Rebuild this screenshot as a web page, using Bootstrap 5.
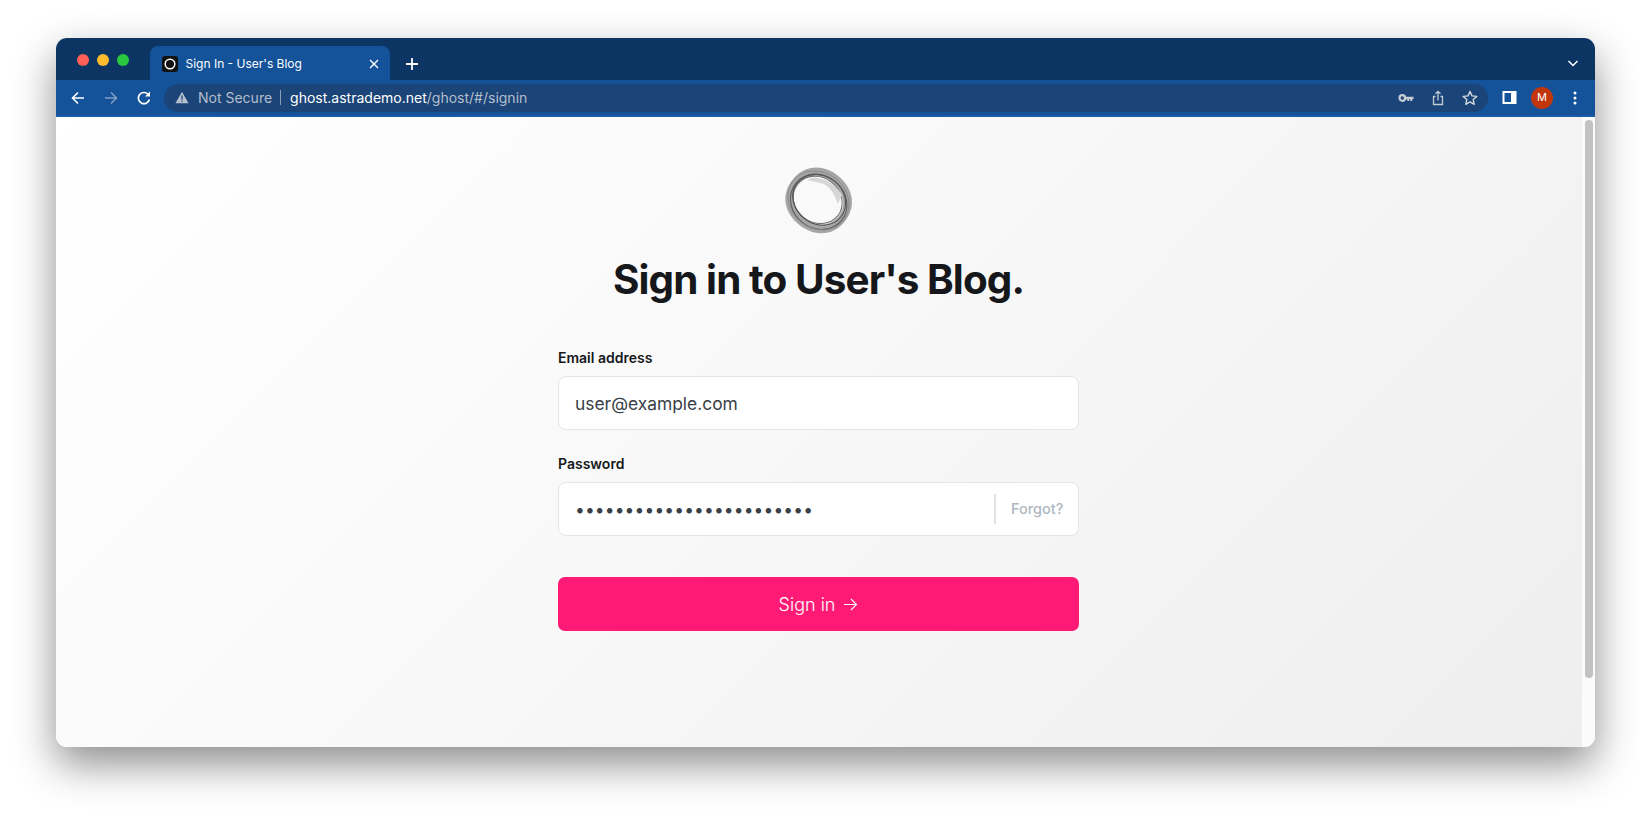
<!DOCTYPE html>
<html lang="en">
<head>
    <meta charset="UTF-8">
    <title>Sign In - User's Blog</title>
    <link href="https://cdn.jsdelivr.net/npm/bootstrap@5.3.2/dist/css/bootstrap.min.css" rel="stylesheet">
    <style>
        html, body { height: 100%; }
        body { background: #fff; overflow: hidden; font-family: Inter, "Liberation Sans", sans-serif; padding: 38px 57px 0 56px; }
        .browser-window { height: 709px; border-radius: 11px; overflow: hidden; box-shadow: 0 17px 42px 0 rgba(0,0,0,.45); }
        .tab-strip { height: 42px; background: #0d3563; padding-left: 94px; padding-right: 16px; color: #fff; }
        .traffic-lights { position: absolute; left: 21px; top: 16px; gap: 8px; }
        .light { width: 12px; height: 12px; border-radius: 50%; }
        .light-red { background: #ff5f57; }
        .light-yellow { background: #febc2e; }
        .light-green { background: #28c840; }
        .browser-tab { width: 240px; height: 34px; margin-top: 8px; background: #14529a; border-radius: 8px 8px 0 0; padding: 1px 11px 0 12px; font-size: 12px; }
        .tab-favicon { width: 16px; height: 16px; background: #111; border-radius: 3px; margin-right: 7.5px; }
        .new-tab { margin-left: 15px; margin-top: 9px; }
        .tab-chevron { margin-left: auto; margin-top: 19px; }
        .tool-bar { height: 37px; background: #14529a; padding: 0 18px 0 14px; border-bottom: 2px solid #1a5aa6; }
        .nav-icons { gap: 17px; margin-right: 12px; }
        .omnibox { height: 28px; background: #1b4478; border-radius: 14px; padding: 0 10px 0 11px; font-size: 14px; color: #b4bfcc; white-space: nowrap; }
        .warn-icon { margin-right: 9px; }
        .url-sep { width: 1px; height: 15px; background: #8a9db5; margin: 0 9px 0 8px; }
        .url-host { color: #fff; }
        .omni-actions { gap: 16px; }
        .tool-right { margin-left: 14px; gap: 14px; }
        .avatar-m { width: 22px; height: 22px; border-radius: 50%; background: #c2360b; color: #fff; font-size: 11px; margin-right: 6px; }
        .page-area { min-height: 0; background: linear-gradient(135deg, #fff 0%, #fafafa 35%, #eeeeee 100%); }
        .page-main { padding-top: 45px; }
        .site-logo { filter: blur(.4px); }
        .signin-title { font-size: 40.4px; font-weight: 700; letter-spacing: -.9px; color: #15171a; line-height: 50px; margin: 16px 0 43px; }
        .signin-form { width: 521px; }
        .field-label { font-size: 14px; font-weight: 600; color: #15171a; line-height: 20px; margin-bottom: 8px; }
        .signin-input { height: 54px; font-size: 17.4px; color: #394047; border: 1px solid #e3e5e7; border-radius: 8px; padding: 0 16px; background: #fff; }
        .signin-input:focus { box-shadow: none; border-color: #e3e5e7; }
        .email-input { margin-bottom: 24px; }
        .pass-box { height: 54px; background: #fff; border: 1px solid #e3e5e7; border-radius: 8px; }
        .pass-box .signin-input { border: 0; height: 52px; background: transparent; letter-spacing: .14px; }
        .forgot-link { width: 69px; height: 30px; border-left: 2px solid #dfe2e5; font-size: 14.5px; font-weight: 500; color: #aeb7c1; text-decoration: none; flex-shrink: 0; margin-right: 15px; padding-left: 15px; }
        .signin-btn { height: 54px; background: #ff1b75; border: 0; border-radius: 7px; color: #fff; font-size: 18px; font-weight: 300; margin-top: 41px; }
        .signin-btn:hover { background: #ff1b75; color: #fff; }
        .scroll-track { width: 14px; background: #fbfbfb; border-left: 1px solid #eee; padding: 3px 2px 0 3px; }
        .scroll-thumb { height: 558px; background: #c2c2c2; border-radius: 5px; }
    </style>
</head>
<body>

<div class="browser-window d-flex flex-column">
    <div class="tab-strip d-flex align-items-start position-relative">
        <div class="traffic-lights d-flex">
            <span class="light light-red"></span>
            <span class="light light-yellow"></span>
            <span class="light light-green"></span>
        </div>
        <div class="browser-tab d-flex align-items-center">
            <span class="tab-favicon d-flex align-items-center justify-content-center">
                <svg width="12" height="12" viewBox="0 0 12 12"><circle cx="6" cy="6" r="4.8" fill="none" stroke="#fff" stroke-width="1.5"/></svg>
            </span>
            <span class="flex-grow-1">Sign In - User's Blog</span>
            <svg width="10" height="10" viewBox="0 0 10 10"><path d="M1 1l8 8M9 1l-8 8" stroke="#fff" stroke-width="1.4"/></svg>
        </div>
        <svg class="new-tab" width="14" height="34" viewBox="0 0 14 34"><path d="M7 11v12M1 17h12" stroke="#fff" stroke-width="1.8"/></svg>
        <svg class="tab-chevron" width="12" height="12" viewBox="0 0 12 12"><path d="M1.5 4l4.5 4.5L10.5 4" fill="none" stroke="#fff" stroke-width="1.5"/></svg>
    </div>

    <div class="tool-bar d-flex align-items-center">
        <div class="nav-icons d-flex align-items-center">
            <svg width="16" height="16" viewBox="0 0 16 16"><path d="M14 8H2.5M8 2.5L2.5 8 8 13.5" fill="none" stroke="#fff" stroke-width="1.6"/></svg>
            <svg width="16" height="16" viewBox="0 0 16 16"><path d="M2 8h11.5M8 2.5L13.5 8 8 13.5" fill="none" stroke="#7f9dc4" stroke-width="1.6"/></svg>
            <svg width="16" height="16" viewBox="0 0 16 16"><path d="M13.4 9.5A5.6 5.6 0 1 1 12 4.2" fill="none" stroke="#fff" stroke-width="1.7"/><path d="M14 1.5V6.5H9z" fill="#fff"/></svg>
        </div>
        <div class="omnibox d-flex align-items-center flex-grow-1">
            <svg class="warn-icon" width="14" height="13" viewBox="0 0 14 13"><path d="M7 .8L13.5 12.2H.5z" fill="#b4bfcc"/><path d="M7 4.5v4M7 9.5v1.3" stroke="#1b4478" stroke-width="1.2"/></svg>
            <span>Not Secure</span>
            <span class="url-sep"></span>
            <span><span class="url-host">ghost.astrademo.net</span>/ghost/#/signin</span>
            <div class="omni-actions d-flex align-items-center ms-auto">
                <svg width="16" height="16" viewBox="0 0 16 16"><circle cx="4.3" cy="8" r="2.8" fill="none" stroke="#c6ccd4" stroke-width="2.2"/><path d="M7 6.8h8.5v2.4h-1.3v1.7h-1.9V9.2h-1.1v1.7H9.3V9.2H7z" fill="#c6ccd4"/></svg>
                <svg width="16" height="16" viewBox="0 0 16 16"><path d="M5.5 6.5H3.5v8h9v-8h-2M8 10.5V1.5M5.5 3.8L8 1.3l2.5 2.5" fill="none" stroke="#c6ccd4" stroke-width="1.3"/></svg>
                <svg width="16" height="16" viewBox="0 0 16 16"><path d="M8 1.5l2 4.4 4.8.5-3.6 3.2 1 4.7L8 11.9l-4.2 2.4 1-4.7L1.2 6.4 6 5.900z" fill="none" stroke="#d3d8de" stroke-width="1.4" stroke-linejoin="round"/></svg>
            </div>
        </div>
        <div class="tool-right d-flex align-items-center">
            <svg width="15" height="15" viewBox="0 0 15 15"><rect x=".5" y="1" width="14" height="13" fill="#fff"/><rect x="2.5" y="3" width="6.5" height="9" fill="#14529a"/></svg>
            <span class="avatar-m d-flex align-items-center justify-content-center">M</span>
            <svg width="4" height="14" viewBox="0 0 4 14"><circle cx="2" cy="2" r="1.5" fill="#fff"/><circle cx="2" cy="7" r="1.5" fill="#fff"/><circle cx="2" cy="12" r="1.5" fill="#fff"/></svg>
        </div>
    </div>

    <div class="page-area d-flex flex-grow-1">
        <main class="page-main flex-grow-1 d-flex flex-column align-items-center">
            <!-- логотип: наложенные кольца -->
            <svg class="site-logo" width="77" height="77" viewBox="0 0 72 72">
                <g fill="none" transform="rotate(38 36 36)">
                    <path d="M36 6.5C54 6.5 67.5 18 67.5 36S54 65 36 65 5 54 5 36 18 6.5 36 6.5zM36 15C22 15 12 24 12 36S22 57 36 57 60 48 60 36 50 15 36 15z" fill="#a6a6a6" fill-rule="evenodd"/>
                    <ellipse cx="35" cy="36" rx="24" ry="21" stroke="#6a6a6a" stroke-width=".9"/>
                    <ellipse cx="36" cy="35" rx="26" ry="22.5" stroke="#505050" stroke-width="1"/>
                    <ellipse cx="37" cy="37" rx="27.5" ry="24.5" stroke="#5a5a5a" stroke-width="1"/>
                    <ellipse cx="36" cy="36" rx="30" ry="26" stroke="#8a8a8a" stroke-width=".8"/>
                </g>
                <path d="M26 17C30 14 35 14 38 16 45 16 52 22 58 31L54 39C51 30 47 23 40 20 35 19 30 18 26 17z" fill="#d6d6d6"/>
            </svg>
            <h1 class="signin-title">Sign in to User's Blog.</h1>
            <form class="signin-form d-flex flex-column">
                <label class="field-label" for="identification">Email address</label>
                <input id="identification" class="form-control signin-input email-input" type="email" value="user@example.com">
                <label class="field-label" for="password">Password</label>
                <div class="pass-box d-flex align-items-center">
                    <input id="password" class="form-control signin-input flex-grow-1" type="password" value="aaaaaaaaaaaaaaaaaaaaaaaa">
                    <a class="forgot-link d-flex align-items-center" href="#">Forgot?</a>
                </div>
                <button type="button" class="btn signin-btn d-flex align-items-center justify-content-center gap-2">
                    Sign in
                    <svg width="15" height="15" viewBox="0 0 15 15"><path d="M1 7.5h12.5M8 2l5.5 5.5L8 13" fill="none" stroke="#fff" stroke-width="1.1"/></svg>
                </button>
            </form>
        </main>
        <div class="scroll-track">
            <div class="scroll-thumb"></div>
        </div>
    </div>
</div>

<script src="https://cdn.jsdelivr.net/npm/bootstrap@5.3.2/dist/js/bootstrap.bundle.min.js"></script>
</body>
</html>
